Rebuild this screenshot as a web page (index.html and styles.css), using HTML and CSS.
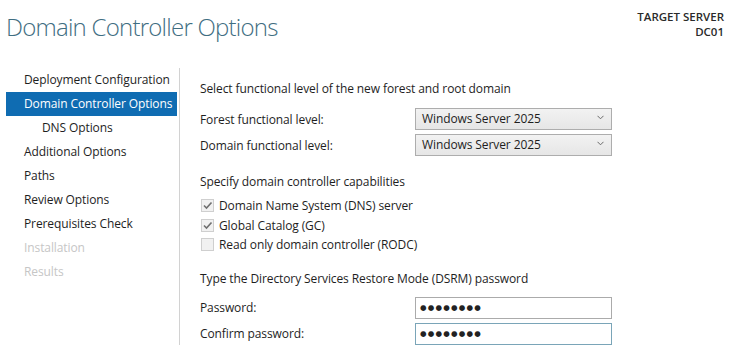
FILE: index.html
```html
<!DOCTYPE html>
<html>
<head>
    <meta charset='utf-8'>
    <title>Domain Controller Options</title>
    <link rel="stylesheet" href="styles.css">
</head>
<body>
    <div class='header'>
        <h1 class='title'>Domain Controller Options</h1>
        <div class='target'>
            <div>TARGET SERVER</div>
            <div>DC01</div>
        </div>
    </div>
    <div class='main'>
        <ul class='nav'>
            <li>Deployment Configuration</li>
            <li class='selected'>Domain Controller Options</li>
            <li class='sub'>DNS Options</li>
            <li>Additional Options</li>
            <li>Paths</li>
            <li>Review Options</li>
            <li>Prerequisites Check</li>
            <li class='disabled'>Installation</li>
            <li class='disabled'>Results</li>
        </ul>
        <div class='content'>
            <div class='heading'>Select functional level of the new forest and root domain</div>
            <div class='field'>
                <label>Forest functional level:</label>
                <div class='select'>
                    <span>Windows Server 2025</span>
                    <svg width="7" height="5" viewBox="0 0 7 5"><path d="M0.5 0.8 L3.5 3.8 L6.5 0.8" fill="none" stroke="#6a6a6a" stroke-width="1"/></svg>
                </div>
            </div>
            <div class='field'>
                <label>Domain functional level:</label>
                <div class='select'>
                    <span>Windows Server 2025</span>
                    <svg width="7" height="5" viewBox="0 0 7 5"><path d="M0.5 0.8 L3.5 3.8 L6.5 0.8" fill="none" stroke="#6a6a6a" stroke-width="1"/></svg>
                </div>
            </div>

            <div class='heading section'>Specify domain controller capabilities</div>
            <div class='check'>
                <span class='box'><svg width="11" height="11" viewBox="0 0 11 11"><path d="M2 5.5 L4.5 8 L9.5 2.5" fill="none" stroke="#707070" stroke-width="1.6"/></svg></span>
                Domain Name System (DNS) server
            </div>
            <div class='check'>
                <span class='box'><svg width="11" height="11" viewBox="0 0 11 11"><path d="M2 5.5 L4.5 8 L9.5 2.5" fill="none" stroke="#707070" stroke-width="1.6"/></svg></span>
                Global Catalog (GC)
            </div>
            <div class='check'>
                <span class='box'></span>
                Read only domain controller (RODC)
            </div>

            <div class='heading section2'>Type the Directory Services Restore Mode (DSRM) password</div>
            <div class='field'>
                <label>Password:</label>
                <div class='input'>●●●●●●●●</div>
            </div>
            <div class='field'>
                <label>Confirm password:</label>
                <div class='input focused'>●●●●●●●●</div>
            </div>
        </div>
    </div>
</body>
</html>
```

FILE: styles.css
```css
body {
    margin: 0;
    padding: 0;
    background-color: #ffffff;
    font-family: "Open Sans", "Noto Sans", sans-serif;
    font-size: 12px;
    color: #1e1e1e;
    overflow: hidden;
}
.header {
    display: flex;
    justify-content: space-between;
    height: 65px;
}
.title {
    margin: 0;
    padding: 10px 0 0 6px;
    font-size: 24px;
    font-weight: 300;
    color: #3f6e82;
    letter-spacing: -0.75px;
}
.target {
    padding: 9px 6px 0 0;
    text-align: right;
    font-weight: 600;
    font-size: 11.5px;
    line-height: 15px;
    color: #2a2a2a;
}
.main {
    display: flex;
}
.nav {
    list-style: none;
    margin: 3px 0 0 0;
    padding: 0 0 0 6px;
    width: 173px;
    height: 290px;
    border-right: 1px solid #d2d2d2;
}
.nav li {
    height: 24px;
    line-height: 24px;
    padding-left: 18px;
    width: 153px;
    white-space: nowrap;
    letter-spacing: -0.1px;
}
.nav li.selected {
    background-color: #0f6cb2;
    color: #ffffff;
}
.nav li.sub {
    padding-left: 36px;
    width: 135px;
}
.nav li.disabled {
    color: #c6c6c6;
}
.content {
    padding: 15px 0 0 20px;
    letter-spacing: -0.1px;
}
.heading {
    height: 18px;
    line-height: 18px;
    margin-bottom: 10px;
}
.heading.section {
    margin-top: 17px;
    margin-bottom: 5px;
}
.heading.section2 {
    margin-top: 15px;
    margin-bottom: 9px;
}
.field {
    display: grid;
    grid-template-columns: 215px 197px;
    align-items: center;
    margin-bottom: 4px;
}
.select {
    box-sizing: border-box;
    height: 22px;
    border: 1px solid #adadad;
    background: linear-gradient(#f2f2f2, #e6e6e6);
    display: flex;
    justify-content: space-between;
    align-items: center;
    padding: 0 7px 1px 6px;
}
.select svg {
    margin-bottom: 3px;
}
.input {
    box-sizing: border-box;
    height: 22px;
    border: 1px solid #ababab;
    background-color: #ffffff;
    padding-left: 4px;
    line-height: 20px;
    font-family: "DejaVu Sans", sans-serif;
    font-size: 7.5px;
    letter-spacing: 1.2px;
    color: #222222;
}
.input.focused {
    border-color: #7aa5b8;
}
.check {
    display: flex;
    align-items: center;
    height: 19.5px;
}
.box {
    box-sizing: border-box;
    width: 13px;
    height: 13px;
    border: 1px solid #cfcfcf;
    background-color: #f1f1f1;
    margin: 0 5px 0 1px;
    display: flex;
    justify-content: center;
    align-items: center;
}
```
